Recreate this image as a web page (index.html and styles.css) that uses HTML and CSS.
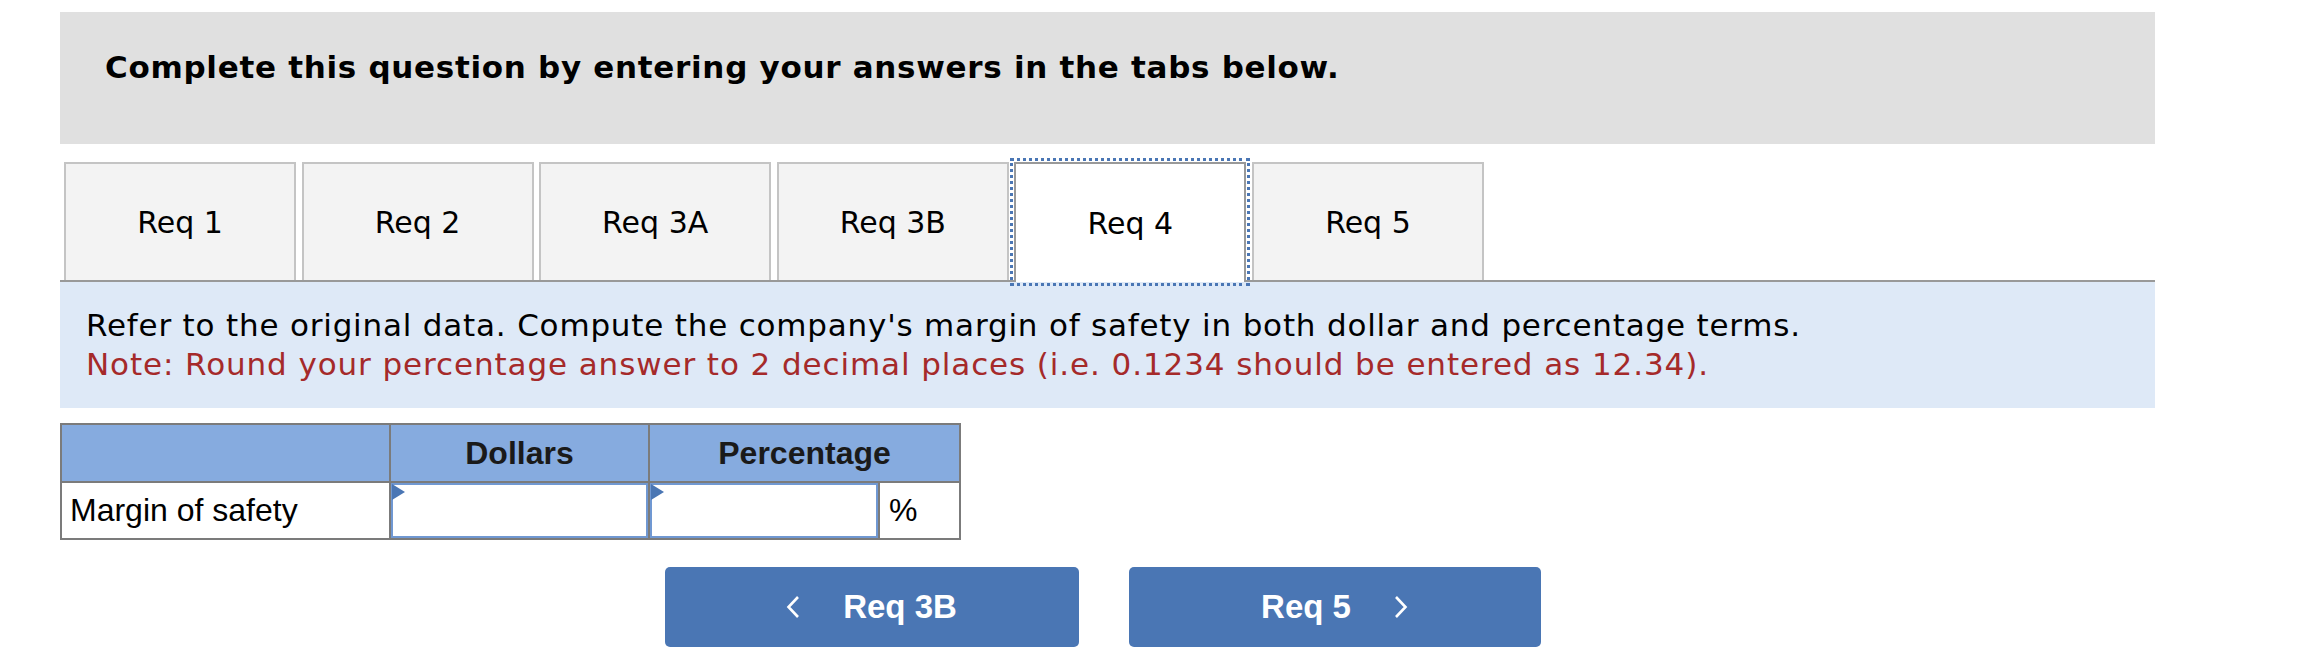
FILE: index.html
```html
<!DOCTYPE html>
<html lang="en">
<head>
    <meta charset="UTF-8">
    <meta name="viewport" content="width=device-width, initial-scale=1.0">
    <title>Req 4</title>
    <link rel="stylesheet" href="styles.css">
</head>
<body>
    <div class="page">
        <!-- Instructions -->
        <div class="intro">
            <h2>Complete this question by entering your answers in the tabs below.</h2>
        </div>

        <!-- Requirement tabs -->
        <ul class="tabs">
            <li class="tab">Req 1</li>
            <li class="tab">Req 2</li>
            <li class="tab">Req 3A</li>
            <li class="tab">Req 3B</li>
            <li class="tab active">Req 4</li>
            <li class="tab">Req 5</li>
        </ul>

        <div class="question">
            <p>Refer to the original data. Compute the company's margin of safety in both dollar and percentage terms.</p>
            <p class="note">Note: Round your percentage answer to 2 decimal places (i.e. 0.1234 should be entered as 12.34).</p>
        </div>

        <table class="answer">
            <tr>
                <th class="label-col"></th>
                <th>Dollars</th>
                <th colspan="2">Percentage</th>
            </tr>
            <tr>
                <td class="label-col">Margin of safety</td>
                <td class="input-cell"><div class="field"><input type="text"></div></td>
                <td class="input-cell pct-input"><div class="field"><input type="text"></div></td>
                <td class="unit">%</td>
            </tr>
        </table>

        <div class="nav">
            <button class="nav-btn prev">
                <svg width="14" height="24" viewBox="0 0 14 24"><path d="M12 2 L2.5 12 L12 22" fill="none" stroke="#fff" stroke-width="2.6"/></svg>
                <span>Req 3B</span>
            </button>
            <button class="nav-btn next">
                <span>Req 5</span>
                <svg width="14" height="24" viewBox="0 0 14 24"><path d="M2 2 L11.5 12 L2 22" fill="none" stroke="#fff" stroke-width="2.6"/></svg>
            </button>
        </div>
    </div>
</body>
</html>
```

FILE: styles.css
```css
body {
    margin: 0;
    padding: 0;
    background: #fff;
    color: #000;
    font-family: 'DejaVu Sans', Verdana, sans-serif;
}

.page {
    margin-left: 60px;
    width: 2095px;
}

.intro {
    margin-top: 12px;
    height: 132px;
    box-sizing: border-box;
    padding: 37px 0 0 45px;
    background-color: #e0e0e0;
}

.intro h2 {
    margin: 0;
    font-size: 31px;
    font-weight: bold;
    letter-spacing: 0.7px;
}

.tabs {
    display: flex;
    gap: 5.6px;
    margin: 18px 0 0;
    padding: 0 0 0 4px;
    list-style: none;
    border-bottom: 2px solid #999;
}

.tab {
    width: 232px;
    height: 118px;
    box-sizing: border-box;
    display: flex;
    align-items: center;
    justify-content: center;
    font-size: 30px;
    background-color: #f3f3f3;
    border: 2px solid #c4c4c4;
    border-bottom: none;
}

.tab.active {
    height: 120px;
    margin-bottom: -2px;
    background-color: #fff;
    border-color: #999;
    outline: 3px dotted #4a76b4;
    outline-offset: 1px;
}

.question {
    padding: 24px 26px 24px;
    background-color: #dee9f7;
    font-size: 31px;
    line-height: 39px;
    letter-spacing: 0.8px;
}

.question p {
    margin: 0;
}

.note {
    color: #a52a2a;
    letter-spacing: 0.9px;
}

.answer {
    margin-top: 15px;
    border-collapse: collapse;
    font-family: 'Liberation Sans', Arial, sans-serif;
    font-size: 32px;
}

.answer th,
.answer td {
    border: 2px solid #7b7b7b;
    padding: 0;
}

.answer th {
    height: 56px;
    background-color: #86abdf;
    color: #1a1a1a;
    font-weight: bold;
    text-align: center;
}

.answer td {
    height: 55px;
}

.label-col {
    width: 327px;
}

.answer td.label-col {
    padding-left: 8px;
    box-sizing: border-box;
}

.input-cell {
    width: 257px;
    padding: 1px;
}

.pct-input {
    width: 228px;
}

.field {
    position: relative;
}

.field::before {
    content: "";
    position: absolute;
    left: 1px;
    top: 1px;
    border-left: 13px solid #4a76b4;
    border-top: 8px solid transparent;
    border-bottom: 8px solid transparent;
}

.field input {
    display: block;
    width: 100%;
    height: 55px;
    box-sizing: border-box;
    margin: 0;
    border: 2px solid #7098d2;
    font-size: 30px;
    font-family: 'Liberation Sans', Arial, sans-serif;
}

.unit {
    width: 81px;
    padding-left: 9px !important;
    box-sizing: border-box;
}

.nav {
    display: flex;
    justify-content: center;
    gap: 50px;
    margin-top: 27px;
    padding-right: 10px;
}

.nav-btn {
    display: flex;
    align-items: center;
    justify-content: center;
    gap: 43px;
    width: 414px;
    height: 80px;
    border: none;
    border-radius: 5px;
    background-color: #4a76b4;
    color: #fff;
    font-family: 'Liberation Sans', Arial, sans-serif;
    font-size: 33px;
    font-weight: bold;
    cursor: pointer;
}

.nav-btn.next {
    width: 412px;
}
```
